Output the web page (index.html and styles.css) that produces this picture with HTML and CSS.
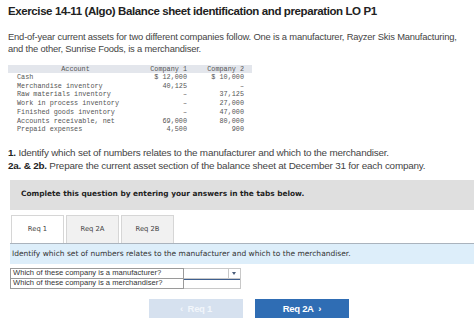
FILE: index.html
```html
<!DOCTYPE html>
<html lang="en">
<head>
  <meta charset="UTF-8" />
  <title>Exercise 14-11 (Algo)</title>
  <link rel="stylesheet" href="styles.css">
</head>
<body>
  <h1 class="title">Exercise 14-11 (Algo) Balance sheet identification and preparation LO P1</h1>

  <p class="intro">End-of-year current assets for two different companies follow. One is a manufacturer, Rayzer Skis Manufacturing, and the other, Sunrise Foods, is a merchandiser.</p>

  <table class="assets">
    <thead>
      <tr>
        <th class="acct">Account</th>
        <th>Company 1</th>
        <th>Company 2</th>
      </tr>
    </thead>
    <tbody>
      <tr><td class="acct">Cash</td><td>$ 12,000</td><td>$ 10,000</td></tr>
      <tr><td class="acct">Merchandise inventory</td><td>40,125</td><td>–</td></tr>
      <tr><td class="acct">Raw materials inventory</td><td>–</td><td>37,125</td></tr>
      <tr><td class="acct">Work in process inventory</td><td>–</td><td>27,000</td></tr>
      <tr><td class="acct">Finished goods inventory</td><td>–</td><td>47,000</td></tr>
      <tr><td class="acct">Accounts receivable, net</td><td>69,000</td><td>80,000</td></tr>
      <tr><td class="acct">Prepaid expenses</td><td>4,500</td><td>900</td></tr>
    </tbody>
  </table>

  <div class="tasks">
    <p><b>1.</b> Identify which set of numbers relates to the manufacturer and which to the merchandiser.</p>
    <p><b>2a. &amp; 2b.</b> Prepare the current asset section of the balance sheet at December 31 for each company.</p>
  </div>

  <div class="notice">Complete this question by entering your answers in the tabs below.</div>

  <div class="tabs">
    <div class="tab active">Req 1</div>
    <div class="tab">Req 2A</div>
    <div class="tab">Req 2B</div>
  </div>

  <div class="panel-info">Identify which set of numbers relates to the manufacturer and which to the merchandiser.</div>

  <table class="answers">
    <tr>
      <td class="q">Which of these company is a manufacturer?</td>
      <td class="pick">
        <div class="select"><span class="field"></span><span class="arrow"></span></div>
      </td>
    </tr>
    <tr>
      <td class="q">Which of these company is a merchandiser?</td>
      <td class="pick"><div class="input"></div></td>
    </tr>
  </table>

  <div class="nav">
    <button class="nav-btn prev" disabled>&lsaquo;&nbsp;&nbsp;Req 1</button>
    <button class="nav-btn next">Req 2A&nbsp;&nbsp;&rsaquo;</button>
  </div>
</body>
</html>
```

FILE: styles.css
```css
  html, body {
    margin: 0;
    padding: 0;
    background: #fff;
  }

  body {
    padding: 0 0 0 8px;
    font-family: 'Liberation Sans', Arial, sans-serif;
    color: #333;
    overflow: hidden;
  }

  .title {
    margin: 0;
    padding-top: 4px;
    font-size: 11.5px;
    line-height: 14px;
    font-weight: 700;
    color: #222;
    letter-spacing: -0.4px;
  }

  .intro {
    margin: 13px 0 0;
    max-width: 455px;
    font-size: 9.4px;
    line-height: 12px;
    color: #444;
    letter-spacing: -0.18px;
  }

  .assets {
    margin-top: 10px;
    border-collapse: collapse;
    font-family: 'Liberation Mono', 'DejaVu Sans Mono', monospace;
    font-size: 6.8px;
    color: #555;
  }

  .assets th {
    background: #e3e6ec;
    font-weight: 400;
    height: 8px;
    line-height: 8px;
    padding: 0 6px 0 0;
    text-align: right;
  }

  .assets td {
    height: 8.7px;
    line-height: 8.7px;
    padding: 0 6px 0 0;
    text-align: right;
    white-space: nowrap;
  }

  .assets th.acct {
    text-align: center;
    width: 135px;
    padding: 0;
  }

  .assets td.acct {
    text-align: left;
    padding-left: 9px;
  }

  .assets th:nth-child(2), .assets td:nth-child(2) {
    width: 44px;
  }

  .assets th:nth-child(3), .assets td:nth-child(3) {
    width: 51px;
    padding-right: 8px;
  }

  .tasks {
    margin-top: 12px;
    font-size: 9.9px;
    line-height: 13px;
    color: #444;
    letter-spacing: -0.2px;
  }

  .tasks p {
    margin: 0;
  }

  .tasks b {
    color: #222;
  }

  .notice {
    margin: 8px 0 0 2px;
    height: 30px;
    line-height: 28px;
    padding-left: 11px;
    background: #dfdfdf;
    font-family: 'DejaVu Sans', Verdana, sans-serif;
    font-size: 7.4px;
    font-weight: 700;
    color: #222;
  }

  .tabs {
    display: flex;
    gap: 2px;
    margin: 5px 0 0 3px;
  }

  .tab {
    width: 51px;
    height: 27px;
    line-height: 27px;
    text-align: center;
    background: #f1f1f1;
    border: 1px solid #d6d6d6;
    border-bottom: none;
    font-family: 'DejaVu Sans', Verdana, sans-serif;
    font-size: 6.8px;
    color: #444;
  }

  .tab.active {
    background: #fff;
  }

  .panel-info {
    margin-left: 2px;
    height: 20px;
    line-height: 20px;
    padding-left: 2px;
    border-top: 1px solid #aab3bd;
    background: #ddeefa;
    font-family: 'DejaVu Sans', Verdana, sans-serif;
    font-size: 7.5px;
    color: #333;
  }

  .answers {
    margin: 4px 0 0 2px;
    border-collapse: collapse;
    font-size: 7.6px;
    color: #333;
  }

  .answers td {
    border: 1px solid #9a9a9a;
    height: 8px;
    padding: 0;
  }

  .answers td.q {
    width: 170px;
    padding-left: 2px;
    line-height: 8px;
  }

  .answers td.pick {
    width: 56px;
    border-color: #c8c8c8;
  }

  .select {
    display: flex;
    height: 9px;
  }

  .select .field {
    flex: 1;
  }

  .select .arrow {
    width: 11px;
    border-left: 1px solid #c8c8c8;
    position: relative;
  }

  .select .arrow::after {
    content: "";
    position: absolute;
    left: 3px;
    top: 3px;
    border-left: 2.5px solid transparent;
    border-right: 2.5px solid transparent;
    border-top: 3px solid #4a5d7a;
  }

  .input {
    height: 8px;
    border: 1px solid #3f5f8f;
    margin: 0 -1px -1px -1px;
  }

  .nav {
    display: flex;
    gap: 12px;
    margin: 10px 0 0 141px;
  }

  .nav-btn {
    width: 94px;
    height: 19px;
    border: none;
    padding: 0;
    font-family: 'Liberation Sans', Arial, sans-serif;
    font-size: 9.5px;
    font-weight: 700;
    color: #fff;
    letter-spacing: -0.3px;
  }

  .nav-btn.prev {
    background: #d6e1ef;
    color: #f2f6fb;
  }

  .nav-btn.next {
    background: #2f6db4;
  }
```
